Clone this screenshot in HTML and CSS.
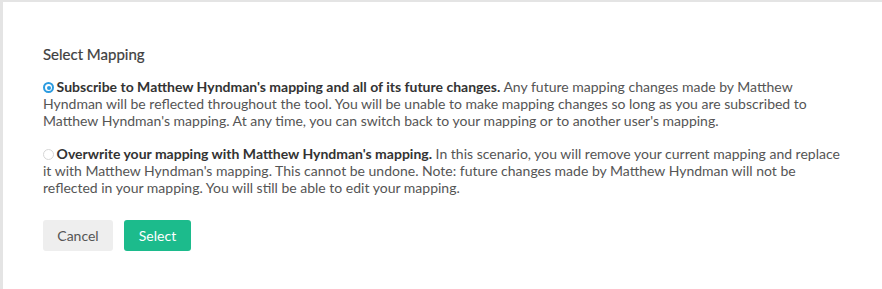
FILE: index.html
```html
<!DOCTYPE html>
<html>
<head>
<meta charset="utf-8">
<link rel="stylesheet" href="styles.css">
</head>
<body>
<div class="frame">
  <div class="panel">
    <h2 class="title">Select Mapping</h2>
    <p class="option"><span class="radio checked"></span> <b>Subscribe to Matthew Hyndman's mapping and all of its future changes.</b> Any future mapping changes made by Matthew Hyndman will be reflected throughout the tool. You will be unable to make mapping changes so long as you are subscribed to Matthew Hyndman's mapping. At any time, you can switch back to your mapping or to another user's mapping.</p>
    <p class="option"><span class="radio"></span> <b>Overwrite your mapping with Matthew Hyndman's mapping.</b> In this scenario, you will remove your current mapping and replace it with Matthew Hyndman's mapping. This cannot be undone. Note: future changes made by Matthew Hyndman will not be reflected in your mapping. You will still be able to edit your mapping.</p>
    <div class="actions">
      <button class="btn btn-cancel">Cancel</button>
      <button class="btn btn-select">Select</button>
    </div>
  </div>
</div>
</body>
</html>
```
FILE: styles.css
```css
html, body {
  margin: 0;
  padding: 0;
  background: #e4e4e4;
}
body {
  font-family: Lato, "Open Sans", sans-serif;
  width: 882px;
  height: 289px;
  overflow: hidden;
}
.frame {
  padding: 2px 0 0 3px;
  height: 289px;
  box-sizing: border-box;
}
.panel {
  background: #fff;
  height: 100%;
  padding: 42px 40px 0 40px;
  box-sizing: border-box;
}
.title {
  margin: 0 0 14px 0;
  font-size: 15px;
  font-weight: 400;
  color: #404040;
  line-height: 20px;
  -webkit-text-stroke: 0.2px #404040;
}
.option {
  margin: 0 0 16px 0;
  font-size: 14px;
  line-height: 17px;
  color: #555;
}
.option b {
  color: #333;
  font-weight: 700;
}
.radio {
  display: inline-block;
  width: 11px;
  height: 11px;
  border-radius: 50%;
  border: 1px solid #d6d6d6;
  box-sizing: border-box;
  vertical-align: -1px;
  margin-right: -1px;
  position: relative;
}
.radio.checked {
  border: 2px solid #2b9be0;
}
.radio.checked::after {
  content: "";
  position: absolute;
  left: 1.5px;
  top: 1.5px;
  width: 4px;
  height: 4px;
  border-radius: 50%;
  background: #2b9be0;
}
.actions {
  display: flex;
  gap: 11px;
  margin-top: 24px;
}
.btn {
  font-family: Lato, "Open Sans", sans-serif;
  font-size: 14px;
  height: 31px;
  border: none;
  border-radius: 3px;
  padding: 0;
  cursor: pointer;
}
.btn-cancel {
  background: #eeeeee;
  color: #555;
  width: 70px;
}
.btn-select {
  background: #1cbb8c;
  color: #fff;
  width: 67px;
}
```
